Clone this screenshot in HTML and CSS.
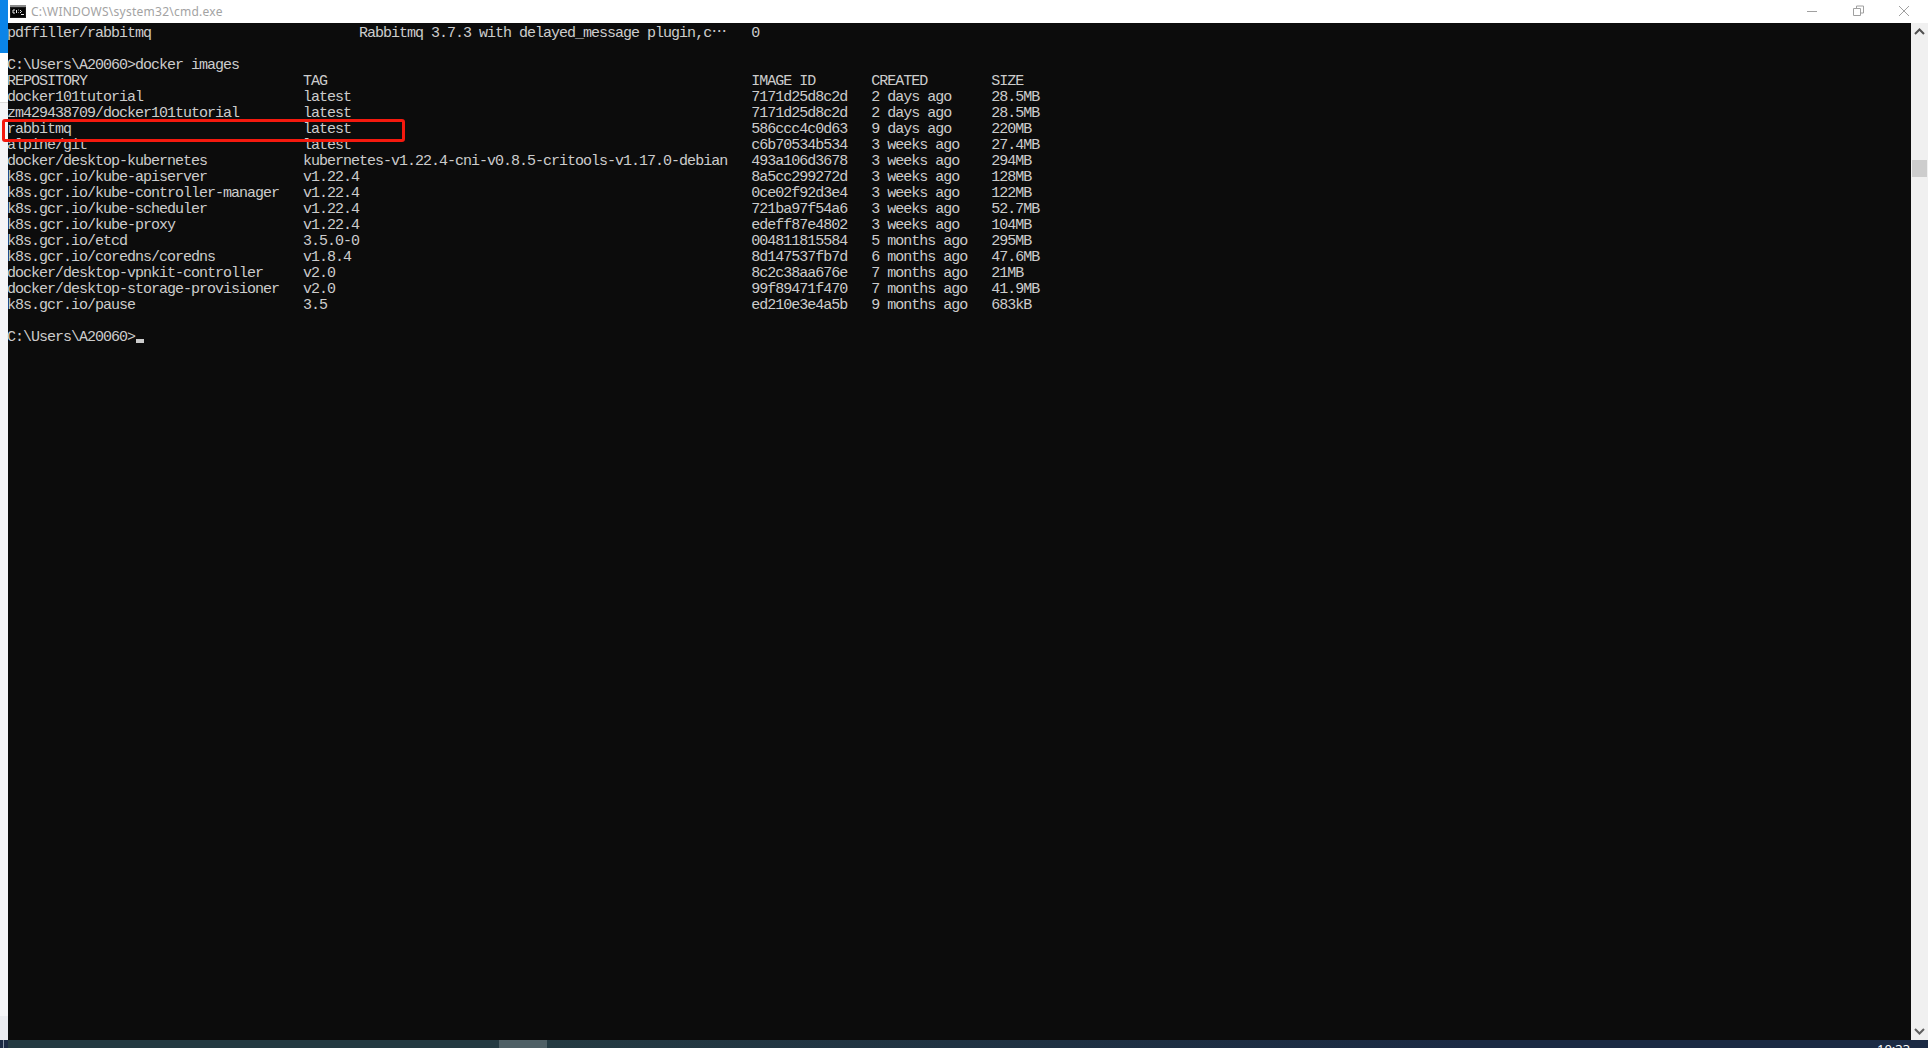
FILE: index.html
```html
<!DOCTYPE html>
<html lang="en">
<head>
<meta charset="utf-8">
<title>C:\WINDOWS\system32\cmd.exe</title>
<link rel="stylesheet" href="styles.css">
</head>
<body>
<div class="screen">
  <div class="main">
    <aside class="strip">
      <div class="strip-blue"></div>
      <div class="strip-white"></div>
      <div class="strip-pale"></div>
      <div class="strip-grey"></div>
    </aside>
    <div class="window">
      <header class="titlebar">
        <svg class="app-icon" width="16" height="13" viewBox="0 0 16 13"><rect width="16" height="13" fill="#1c1c1c"/><rect x="0" y="0" width="16" height="2" fill="#8a8a8a"/><rect x="1" y="3" width="14" height="9" fill="#050505"/><path d="M5 5H3v3h2M6.500 5v3M8 5h.6M8 7.500h.6M10 5l1.500 1.500L10 8" fill="none" stroke="#e8e8e8" stroke-width="1"/><rect x="11" y="9" width="3" height="1" fill="#e8e8e8"/></svg>
        <span class="title">C:\WINDOWS\system32\cmd.exe</span>
        <div class="controls">
          <svg class="ctl" width="46" height="22" viewBox="0 0 46 22"><path d="M18 10.500h10" stroke="#a0a0a0" stroke-width="1"/></svg>
          <svg class="ctl" width="46" height="22" viewBox="0 0 46 22"><path d="M18.500 7.500h7v7h-7zM21.500 7.500v-2.500h7v7h-3" fill="none" stroke="#a0a0a0" stroke-width="1"/></svg>
          <svg class="ctl" width="46" height="22" viewBox="0 0 46 22"><path d="M18 5l10 10M28 5l-10 10" stroke="#a0a0a0" stroke-width="1"/></svg>
        </div>
      </header>
      <div class="body">
        <pre class="console">pdffiller/rabbitmq                          Rabbitmq 3.7.3 with delayed_message plugin,c<span class="ellipsis">…</span>   0

C:\Users\A20060&gt;docker images
REPOSITORY                           TAG                                                     IMAGE ID       CREATED        SIZE
docker101tutorial                    latest                                                  7171d25d8c2d   2 days ago     28.5MB
zm429438709/docker101tutorial        latest                                                  7171d25d8c2d   2 days ago     28.5MB
rabbitmq                             latest                                                  586ccc4c0d63   9 days ago     220MB
alpine/git                           latest                                                  c6b70534b534   3 weeks ago    27.4MB
docker/desktop-kubernetes            kubernetes-v1.22.4-cni-v0.8.5-critools-v1.17.0-debian   493a106d3678   3 weeks ago    294MB
k8s.gcr.io/kube-apiserver            v1.22.4                                                 8a5cc299272d   3 weeks ago    128MB
k8s.gcr.io/kube-controller-manager   v1.22.4                                                 0ce02f92d3e4   3 weeks ago    122MB
k8s.gcr.io/kube-scheduler            v1.22.4                                                 721ba97f54a6   3 weeks ago    52.7MB
k8s.gcr.io/kube-proxy                v1.22.4                                                 edeff87e4802   3 weeks ago    104MB
k8s.gcr.io/etcd                      3.5.0-0                                                 004811815584   5 months ago   295MB
k8s.gcr.io/coredns/coredns           v1.8.4                                                  8d147537fb7d   6 months ago   47.6MB
docker/desktop-vpnkit-controller     v2.0                                                    8c2c38aa676e   7 months ago   21MB
docker/desktop-storage-provisioner   v2.0                                                    99f89471f470   7 months ago   41.9MB
k8s.gcr.io/pause                     3.5                                                     ed210e3e4a5b   9 months ago   683kB

C:\Users\A20060&gt;<span class="cursor"></span></pre>
        <div class="scrollbar">
          <svg class="arrow" width="17" height="17" viewBox="0 0 17 17"><path d="M4 11l4.500-4.500L13 11" fill="none" stroke="#505050" stroke-width="2"/></svg>
          <div class="track"><div class="thumb"></div></div>
          <svg class="arrow" width="17" height="17" viewBox="0 0 17 17"><path d="M4 6l4.500 4.500L13 6" fill="none" stroke="#606060" stroke-width="2"/></svg>
        </div>
      </div>
    </div>
  </div>
  <footer class="taskbar">
    <div class="task-left"></div>
    <div class="task-thumb"></div>
    <div class="task-fill"></div>
    <div class="task-right"><span class="clock">10:33</span></div>
  </footer>
  <div class="highlight"></div>
</div>
</body>
</html>
```
FILE: styles.css
```css
html, body { margin: 0; padding: 0; height: 100%; overflow: hidden; background: #0c0c0c; }
.screen { position: relative; width: 1928px; height: 1048px; display: flex; flex-direction: column; overflow: hidden; }
.main { display: flex; height: 1040px; }
.strip { width: 8px; flex: none; display: flex; flex-direction: column; }
.strip-blue { height: 53px; background: #0a84e8; }
.strip-white { height: 49px; background: #fff; border-bottom: 1px solid #dcdcdc; }
.strip-pale { flex: 1; background: #f5f5f7; }
.strip-grey { height: 24px; background: #ebecf0; }
.window { flex: 1; display: flex; flex-direction: column; min-width: 0; }
.titlebar { height: 23px; flex: none; background: #fff; display: flex; align-items: center; }
.app-icon { margin: 0 0 1px 2px; }
.title { margin-left: 5px; font: 12px "Noto Sans", sans-serif; color: #a3a3a3; letter-spacing: 0.25px; }
.controls { margin-left: auto; display: flex; margin-right: 1px; }
.ctl { display: block; }
.body { flex: 1; display: flex; min-height: 0; background: #0c0c0c; }
.console { flex: 1; margin: 0 0 0 -1px; padding-top: 0; color: #cccccc; font: 15px/16px "Liberation Mono", monospace; letter-spacing: -1px; white-space: pre; overflow: hidden; }
.ellipsis { font-family: "Noto Sans CJK SC", sans-serif; display: inline-block; width: 16px; text-align: center; line-height: 1; letter-spacing: 0; }
.cursor { display: inline-block; width: 8px; height: 4px; background: #cccccc; vertical-align: -2px; margin-left: 1px; }
.scrollbar { width: 17px; flex: none; background: #f0f0f0; display: flex; flex-direction: column; }
.arrow { display: block; flex: none; }
.track { flex: 1; padding-top: 120px; }
.thumb { height: 17px; margin: 0 1px; background: #cdcdcd; }
.taskbar { height: 8px; flex: none; display: flex; background: #243a42; }
.task-left { width: 8px; background: linear-gradient(90deg, #1b2a44 3px, #8a96a8 3px, #8a96a8 4px, #1b2a44 4px); }
.task-thumb { width: 48px; margin-left: 491px; background: #4f6066; }
.task-fill { flex: 1; background: linear-gradient(90deg, #243a42, #1b2a44 70%); }
.task-right { width: 60px; background: #1b2a44; overflow: hidden; position: relative; }
.clock { position: absolute; left: 9px; top: 2px; font: 13px/14px "Noto Sans", sans-serif; color: #fff; }
.highlight { position: absolute; left: 2px; top: 119px; width: 397px; height: 17px; border: 3px solid #f5190e; border-radius: 3px; }
```
